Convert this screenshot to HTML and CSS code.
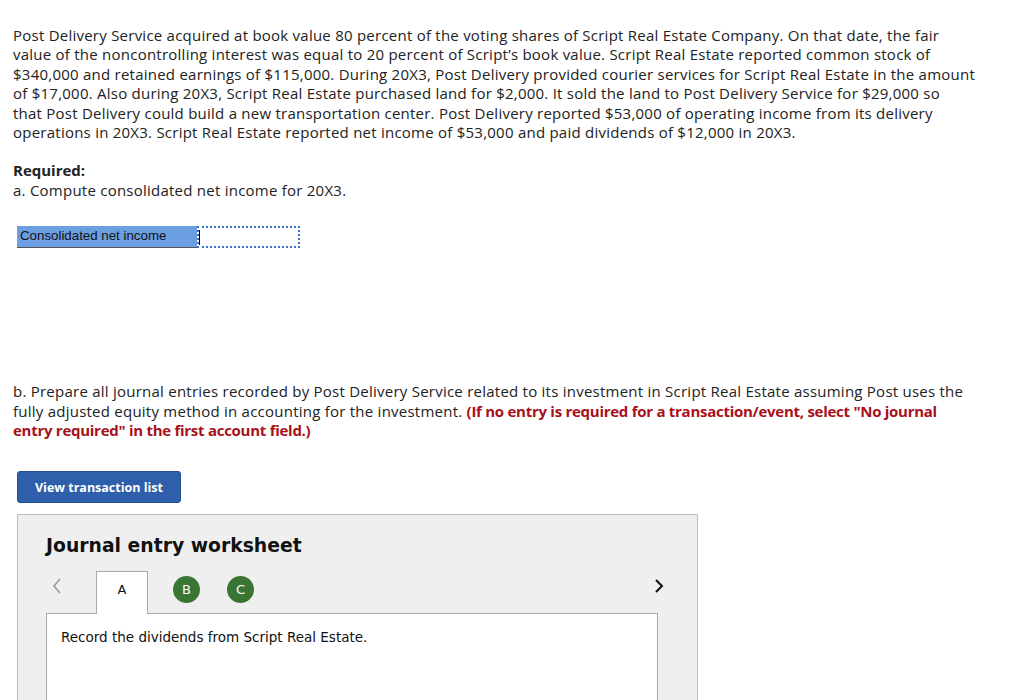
FILE: index.html
```html
<!DOCTYPE html>
<html>
<head>
<meta charset="utf-8">
<link rel="stylesheet" href="styles.css">
</head>
<body>
<div class="page">
  <p class="intro">Post Delivery Service acquired at book value 80 percent of the voting shares of Script Real Estate Company. On that date, the fair<br>value of the noncontrolling interest was equal to 20 percent of Script’s book value. Script Real Estate reported common stock of<br>$340,000 and retained earnings of $115,000. During 20X3, Post Delivery provided courier services for Script Real Estate in the amount<br>of $17,000. Also during 20X3, Script Real Estate purchased land for $2,000. It sold the land to Post Delivery Service for $29,000 so<br>that Post Delivery could build a new transportation center. Post Delivery reported $53,000 of operating income from its delivery<br>operations in 20X3. Script Real Estate reported net income of $53,000 and paid dividends of $12,000 in 20X3.</p>

  <p class="req"><strong>Required:</strong><br>a. Compute consolidated net income for 20X3.</p>

  <div class="answer-row">
    <div class="answer-label">Consolidated net income</div>
    <div class="answer-input"><span class="caret"></span></div>
  </div>

  <p class="partb">b. Prepare all journal entries recorded by Post Delivery Service related to its investment in Script Real Estate assuming Post uses the<br>fully adjusted equity method in accounting for the investment. <strong class="warn">(If no entry is required for a transaction/event, select "No journal<br>entry required" in the first account field.)</strong></p>

  <button class="btn">View transaction list</button>

  <div class="worksheet">
    <h2 class="ws-title">Journal entry worksheet</h2>
    <div class="tabs">
      <span class="arrow prev">
        <svg width="10" height="16" viewBox="0 0 10 16"><path d="M8 1 L2 8 L8 15" fill="none" stroke="#999" stroke-width="1.6"/></svg>
      </span>
      <div class="tab active">A</div>
      <div class="dot">B</div>
      <div class="dot">C</div>
      <span class="arrow next">
        <svg width="10" height="16" viewBox="0 0 10 16"><path d="M2 2 L8 8 L2 14" fill="none" stroke="#111" stroke-width="2"/></svg>
      </span>
    </div>
    <div class="ws-body">
      <p>Record the dividends from Script Real Estate.</p>
    </div>
  </div>
</div>
</body>
</html>
```
FILE: styles.css
```css
html, body {
  margin: 0;
  padding: 0;
  background: #fff;
}
.page {
  padding: 26px 13px 0 13px;
  font-family: "Open Sans", "Lato", sans-serif;
  font-size: 15px;
  letter-spacing: 0.24px;
  color: #222;
}
p { margin: 0; white-space: nowrap; }
.intro {
  line-height: 19.4px;
}
.req {
  margin-top: 19px;
  line-height: 19.4px;
}
.req strong { font-weight: 700; letter-spacing: 0; }
.answer-row {
  display: flex;
  margin: 26px 0 0 4px;
  height: 22px;
  letter-spacing: 0;
}
.answer-label {
  width: 180px;
  background: #6c9fe1;
  border-bottom: 1px solid #555;
  font-family: "Liberation Sans", Arial, sans-serif;
  font-size: 13.3px;
  color: #111;
  padding: 2px 0 0 3px;
  box-sizing: border-box;
}
.answer-input {
  width: 103px;
  border: 2px dotted #3b73c6;
  box-sizing: border-box;
  position: relative;
}
.caret {
  position: absolute;
  left: 0;
  top: 2px;
  width: 1px;
  height: 15px;
  background: #000;
}
.partb {
  margin-top: 134px;
  line-height: 19.4px;
}
.warn {
  color: #a8101a;
  font-weight: 700;
  letter-spacing: -0.27px;
}
.btn {
  margin: 31px 0 0 4px;
  display: block;
  width: 164px;
  height: 32px;
  background: #2d5fab;
  color: #fff;
  border: 1px solid #23508f;
  border-radius: 3px;
  font-family: "Open Sans", sans-serif;
  font-weight: 700;
  font-size: 12.5px;
  padding: 0;
}
.worksheet {
  margin: 11px 0 0 4px;
  width: 681px;
  height: 200px;
  background: #efefef;
  border: 1px solid #bcbcbc;
  box-sizing: border-box;
  padding: 0 0 0 28px;
  font-family: "DejaVu Sans", Verdana, sans-serif;
  letter-spacing: 0;
  color: #111;
}
.ws-title {
  margin: 19px 0 0 0;
  font-size: 18.8px;
  font-weight: 700;
  line-height: 24px;
}
.tabs {
  display: flex;
  align-items: flex-end;
  height: 42px;
  margin-top: 13px;
  width: 611px;
  position: relative;
}
.arrow {
  position: absolute;
  top: 7px;
}
.arrow.prev { left: 6px; }
.arrow.next { right: -7px; }
.tab {
  margin-left: 50px;
  width: 52px;
  height: 43px;
  box-sizing: border-box;
  background: #fff;
  border: 1px solid #aaa;
  border-bottom: none;
  font-size: 13px;
  text-align: center;
  line-height: 36px;
  position: relative;
  z-index: 1;
  margin-bottom: -1px;
}
.dot {
  width: 27px;
  height: 27px;
  border-radius: 50%;
  background: #3b7534;
  color: #fff;
  font-size: 13px;
  text-align: center;
  line-height: 27px;
  margin-bottom: 10px;
}
.tab + .dot { margin-left: 25px; }
.dot + .dot { margin-left: 27px; }
.ws-body {
  width: 612px;
  height: 100px;
  background: #fff;
  border: 1px solid #aaa;
  box-sizing: border-box;
  padding: 15px 0 0 14px;
  font-size: 13.5px;
}
```
